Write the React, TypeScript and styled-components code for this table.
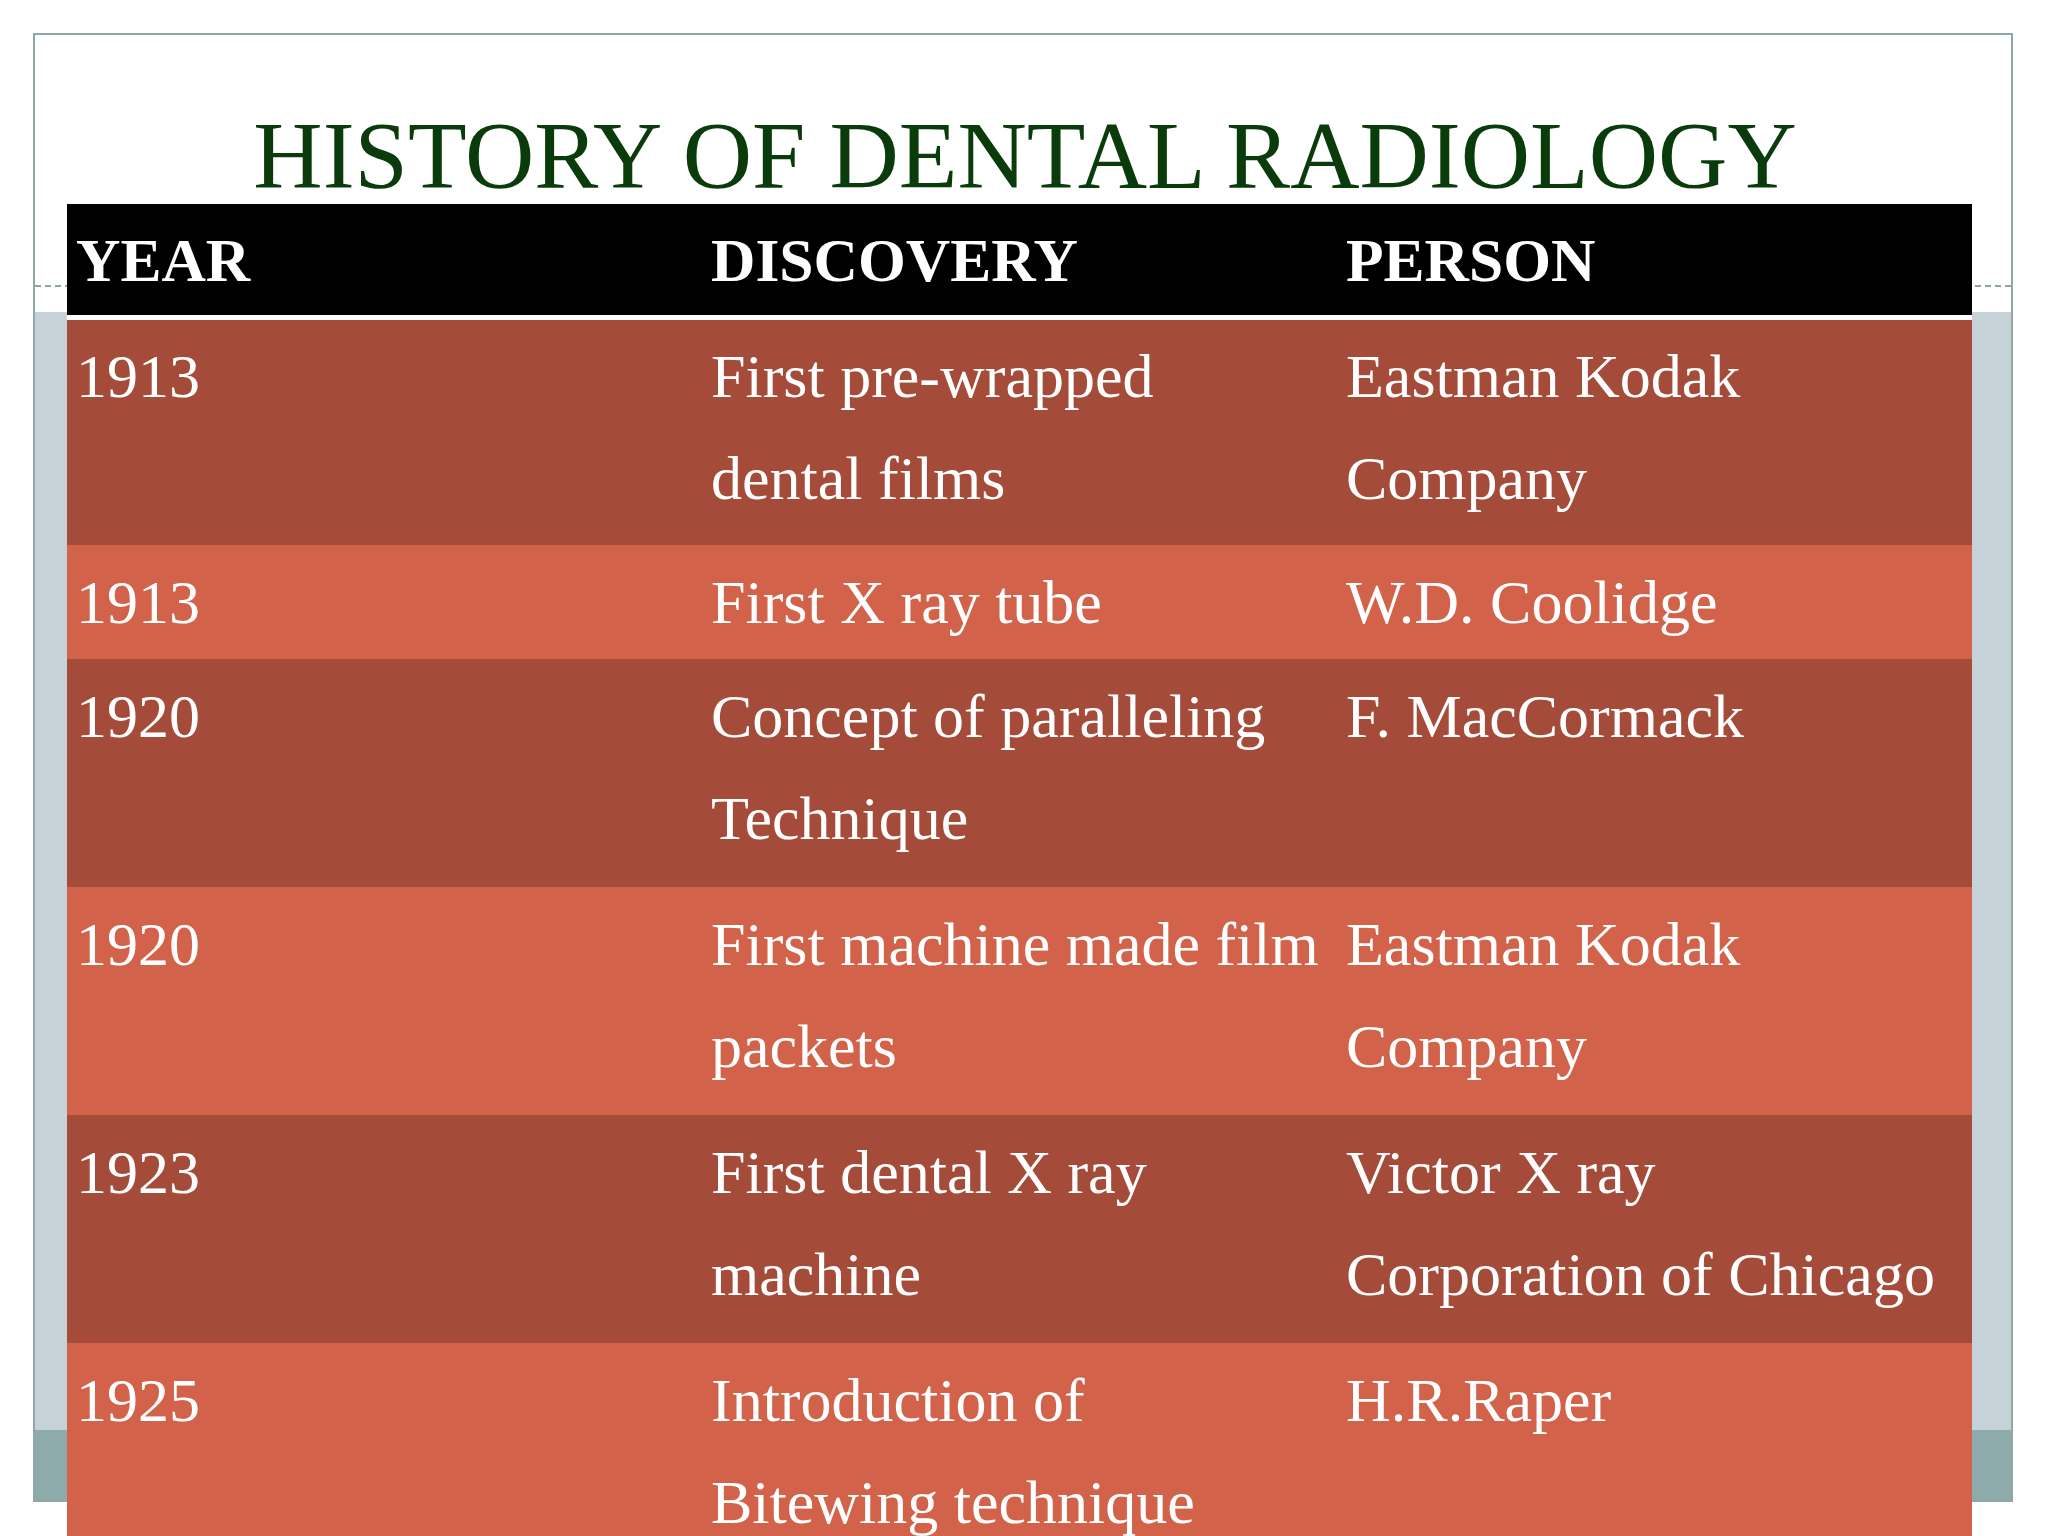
import { FC } from 'react';
import styled, { createGlobalStyle } from 'styled-components';

// page

const GlobalStyle = createGlobalStyle`
    html, body {
        margin: 0;
        padding: 0;
        overflow: hidden;
        background: #fff;
    }
    body {
        font-family: "Liberation Serif", "Times New Roman", serif;
    }
`

const Page = styled.div`
    width: 2048px;
    height: 1536px;
    padding: 33px 0 0 33px;
    box-sizing: border-box;
`

const Slide = styled.div`
    position: relative;
    width: 1980px;
    height: 1469px;
    box-sizing: border-box;
    border: 2px solid #8fa7a7;
    background: linear-gradient(
        to bottom,
        #ffffff 0,
        #ffffff 277px,
        #c5d3d8 277px,
        #c5d3d8 1395px,
        #8eabab 1395px
    );
    &::before {
        content: '';
        position: absolute;
        left: 0;
        right: 0;
        top: 250px;
        border-top: 2px dashed #8fa5a5;
    }
`

const Title = styled.h1`
    margin: 0;
    padding-top: 73px;
    height: 96px;
    text-align: center;
    font-family: "Liberation Serif", "Times New Roman", serif;
    font-weight: normal;
    font-size: 96px;
    line-height: 96px;
    color: #0a3b0a;
    white-space: nowrap;
    padding-left: 4px;
`

// table

const Table = styled.div`
    position: relative;
    z-index: 1;
    margin-left: 32px;
    width: 1905px;
`

const HeadRow = styled.div`
    display: grid;
    grid-template-columns: repeat(3, 1fr);
    background: #000;
    height: 111px;
    border-bottom: 5px solid #fff;
`

const HeadCell = styled.div`
    padding-left: 9px;
    font-family: "Liberation Serif", "Times New Roman", serif;
    font-weight: bold;
    font-size: 61.5px;
    line-height: 113px;
    color: #fff;
`

interface IRow {
    dark: boolean;
    lines: number;
}

const Row = styled.div<IRow>`
    display: grid;
    grid-template-columns: repeat(3, 1fr);
    background: ${props => props.dark ? '#a54b39' : '#d3624a'};
    padding-top: 6px;
    padding-bottom: ${props => 6 + (props.lines - 1) * 12}px;
    &:nth-child(2) {
        padding-top: 5px;
        padding-bottom: ${props => 4 + (props.lines - 1) * 12}px;
    }
`

const Cell = styled.div`
    padding-left: 9px;
    font-family: "Liberation Serif", "Times New Roman", serif;
    font-size: 62px;
    line-height: 102px;
    color: #fff;
`

const Line = styled.div`
    white-space: nowrap;
`

interface IEntry {
    year: string;
    discovery: string[];
    person: string[];
}

const entries: IEntry[] = [
    { year: '1913', discovery: ['First pre-wrapped', 'dental films'], person: ['Eastman Kodak', 'Company'] },
    { year: '1913', discovery: ['First X ray tube'], person: ['W.D. Coolidge'] },
    { year: '1920', discovery: ['Concept of paralleling', 'Technique'], person: ['F. MacCormack'] },
    { year: '1920', discovery: ['First machine made film', 'packets'], person: ['Eastman Kodak', 'Company'] },
    { year: '1923', discovery: ['First dental X ray', 'machine'], person: ['Victor X ray', 'Corporation of Chicago'] },
    { year: '1925', discovery: ['Introduction of', 'Bitewing technique'], person: ['H.R.Raper'] },
]

const App: FC = () => {
    return (
        <Page>
            <GlobalStyle/>
            <Slide>
                <Title>HISTORY OF DENTAL RADIOLOGY</Title>
                <Table>
                    <HeadRow>
                        <HeadCell>YEAR</HeadCell>
                        <HeadCell>DISCOVERY</HeadCell>
                        <HeadCell>PERSON</HeadCell>
                    </HeadRow>
                    {entries.map((e, i) => {
                        const lines = Math.max(e.discovery.length, e.person.length);
                        return (
                            <Row key={i} dark={i % 2 === 0} lines={lines}>
                                <Cell><Line>{e.year}</Line></Cell>
                                <Cell>{e.discovery.map(l => <Line key={l}>{l}</Line>)}</Cell>
                                <Cell>{e.person.map(l => <Line key={l}>{l}</Line>)}</Cell>
                            </Row>
                        );
                    })}
                </Table>
            </Slide>
        </Page>
    );
};

export default App;
